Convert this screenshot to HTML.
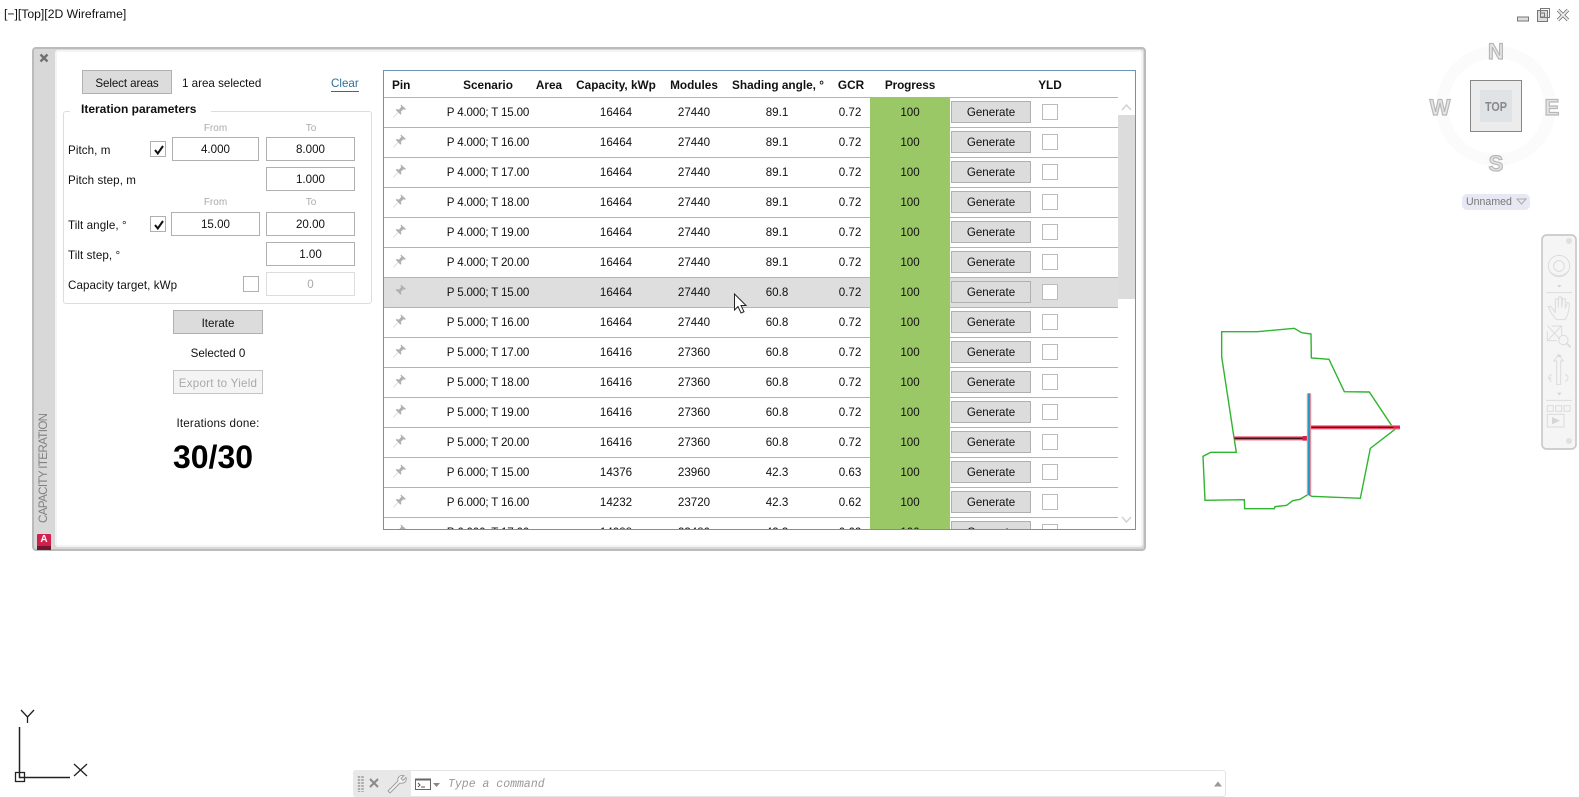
<!DOCTYPE html>
<html><head><meta charset="utf-8"><title>Capacity Iteration</title>
<style>
html,body{margin:0;padding:0;background:#fff;width:1579px;height:797px;overflow:hidden}
body{position:relative;font:11.6px "Liberation Sans",sans-serif;color:#111}
.abs,.t,.btn,.inp,.chk{position:absolute}
.t{white-space:nowrap}
.ctr{text-align:center}
.btn{box-sizing:border-box;background:#dcdcdc;border:1px solid #b0b0b0;text-align:center;line-height:25px}
.inp{box-sizing:border-box;background:#fff;border:1px solid #b0b0b0;text-align:center;line-height:24px;height:24px}
.chk{box-sizing:border-box;width:16px;height:16px;background:#fff;border:1px solid #b0b0b0}
.chk svg{position:absolute;left:1px;top:1px}
.hd{position:absolute;top:7px;font-weight:bold;font-size:11.8px;text-align:center;white-space:nowrap}
.r{position:absolute;left:0;width:734px;height:30px;box-sizing:border-box;border-top:1px solid #b4b4b4;line-height:30px}
.r span{position:absolute;top:0;text-align:center;white-space:nowrap}
.r .a{left:54px;width:100px;letter-spacing:-.17px}
.r .b{left:192px;width:80px}
.r .c{left:270px;width:80px}
.r .d{left:353px;width:80px}
.r .e{left:436px;width:60px}
.r .f{left:486px;width:80px;background:#9bc866;height:30px;top:-1px;line-height:32px}
.r .g{left:567px;top:3px;width:80px;height:22px;box-sizing:border-box;background:#dcdcdc;border:1px solid #b0b0b0;line-height:22px}
.r .h{left:658px;top:6px;width:16px;height:16px;box-sizing:border-box;border:1px solid #bbb;background:#fff}
.r svg{position:absolute;left:8px;top:5px}
.sel{background:#dedede}
.l{letter-spacing:.08px}
</style></head><body>
<svg width="0" height="0" style="position:absolute"><defs>
<g id="p"><path d="M9 1.500 14 6 12.600 6.800 11.600 6.200 8.900 8.600 9.400 11 8.400 11.600 3.800 7 4.600 6 7 6.600 9.400 3.600 8.500 2.600Z" fill="#b0b0b0"/><path d="M5.800 9.500 1.500 14.500" stroke="#e2e2e2" stroke-width="1.200"/></g>
</defs></svg>

<div class="t" style="left:4px;top:7px;font-size:12.2px">[&minus;][Top][2D Wireframe]</div>

<!-- Window controls -->
<svg class="abs" style="left:1510px;top:5px" width="65" height="20" fill="none">
<rect x="7.500" y="12" width="11" height="4" fill="#ddd" stroke="#777"/>
<rect x="27.500" y="5.500" width="10" height="11" fill="#ddd" stroke="#777"/><rect x="30.500" y="3.500" width="9" height="9" stroke="#777"/><rect x="30.500" y="8" width="4" height="4" stroke="#777"/>
<path d="M48 5 58 15M58 5 48 15" stroke="#777" stroke-width="3.400"/><path d="M48 5 58 15M58 5 48 15" stroke="#eee" stroke-width="1.800"/>
</svg>

<!-- ViewCube -->
<svg class="abs" style="left:1425px;top:35px" width="145" height="145">
<circle cx="71" cy="71" r="54" fill="none" stroke="#fbfbfb" stroke-width="12"/>
<rect x="45.500" y="45.500" width="51" height="51" fill="#ececec" stroke="#888" stroke-width="1"/>
<rect x="55" y="55" width="32" height="32" fill="#dfe3e5"/>
<text x="71" y="76" text-anchor="middle" font-family="Liberation Sans" font-weight="bold" font-size="12.500" fill="#888" textLength="22" lengthAdjust="spacingAndGlyphs">TOP</text>
<g font-family="Liberation Sans" font-weight="bold" font-size="22" fill="#e6e6e6" stroke="#b8b8b8" stroke-width="1.200" text-anchor="middle">
<text x="71" y="24">N</text><text x="71" y="136">S</text><text x="15" y="80">W</text><text x="127" y="80">E</text></g>
</svg>
<div class="abs" style="left:1462px;top:194px;width:68px;height:16px;background:#e8e8f4;border-radius:5px"></div>
<div class="t" style="left:1466px;top:196px;font-size:10.600px;color:#777">Unnamed</div>
<svg class="abs" style="left:1516px;top:198px" width="12" height="8"><path d="M1 1H10L5.500 6Z" fill="none" stroke="#aaa"/></svg>

<!-- Nav bar -->
<svg class="abs" style="left:1510px;top:225px" width="69" height="230" viewBox="0 0 207 690" fill="none">
<rect x="96" y="30" width="102" height="642" rx="14" fill="#f5f5f5" stroke="#c9c9c9" stroke-width="5"/>
<circle cx="177" cy="48" r="9" fill="#e0e0e0"/><circle cx="177" cy="648" r="9" fill="#e0e0e0"/>
<g stroke="#dcdcdc" stroke-width="3">
<circle cx="147" cy="123" r="32"/><circle cx="147" cy="123" r="16"/><path d="M120 140Q147 165 174 140"/>
<path d="M108 203H186M108 526H186"/>
<path d="M115 245Q125 270 140 284H165Q178 265 178 235L172 232 166 250V222L158 220 155 248V216L146 216 145 248V222L136 222 136 262 122 244Z"/>
<path d="M112 347 155 302M125 303H155V330M112 320V347H140M112 302 150 342"/>
<circle cx="160" cy="345" r="14"/><path d="M170 355 182 367" stroke-width="6"/>
<path d="M146 388 132 408H140V478H152V408H160ZM125 448Q108 458 125 470M166 448Q182 458 166 470M118 460H125"/>
<rect x="112" y="542" width="18" height="17"/><rect x="137" y="542" width="18" height="17"/><rect x="162" y="542" width="18" height="17"/>
<rect x="112" y="568" width="50" height="38"/></g>
<g fill="#d6d6d6"><path d="M141 180H155L148 188ZM141 390H155L148 398ZM141 503H155L148 511Z"/><path d="M126 576 150 587 126 598Z"/></g>
</svg>

<!-- Drawing -->
<svg class="abs" style="left:1180px;top:310px" width="220" height="210" viewBox="0 0 660 630" fill="none">
<path d="M125 65H232L343 55 365 68 393 72 394 144 447 148 493 245 568 246 637 350 645 358 571 415 541 565 395 559 385 553 360 568 338 572 320 586 285 590 283 596H194L193 569 75 571 69 439 92 427H169L162 383 125 140Z" stroke="#2fb52f" stroke-width="4.200"/>
<path d="M163 385H385M390 352H660" stroke="#f1808f" stroke-width="13"/>
<path d="M163 385H370M390 352H660" stroke="#e01c44" stroke-width="7"/>
<path d="M163 385H368M392 352H640" stroke="#301018" stroke-width="3"/>
<rect x="368" y="378" width="18" height="14" fill="#e01c44"/>
<path d="M387 250V555" stroke="#f08a9c" stroke-width="13"/>
<path d="M387 250V555" stroke="#1f9fc0" stroke-width="6"/>
</svg>

<!-- Panel -->
<div class="abs" style="left:32px;top:47px;width:1114px;height:504px;box-sizing:border-box;background:#d8d8d8;border:2px solid #bbb;border-radius:4px"></div>
<div class="abs" style="left:55px;top:50px;width:1088px;height:497px;box-sizing:border-box;background:#fff;border:2px solid #f4f4f4;border-radius:3px"></div>
<svg class="abs" style="left:39px;top:53px" width="10" height="10"><path d="M1.500 1.500 8.500 8.500M8.500 1.500 1.500 8.500" stroke="#707070" stroke-width="2.400"/></svg>
<div class="t" style="left:36px;top:413px;height:110px;width:15px;writing-mode:vertical-rl;transform:rotate(180deg);font-size:11.600px;color:#808080;line-height:15px;text-align:left;letter-spacing:-.65px">CAPACITY ITERATION</div>
<div class="abs" style="left:37px;top:534px;width:14px;height:16px;background:#d31f4e;border-radius:1px"></div>
<div class="abs" style="left:37px;top:546px;width:14px;height:4px;background:#731630"></div>
<div class="t ctr" style="left:37px;top:534px;width:14px;color:#fff;font-weight:bold;font-size:10px;line-height:12px">A</div>

<!-- Left controls -->
<div class="btn" style="left:82px;top:70px;width:90px;height:24px;letter-spacing:-.1px">Select areas</div>
<div class="t" style="left:182px;top:77px">1 area selected</div>
<div class="t" style="left:331px;top:77px;color:#2d6f95;border-bottom:1px solid #2d6f95;padding-bottom:1px">Clear</div>

<div class="abs" style="left:63px;top:111px;width:309px;height:193px;box-sizing:border-box;border:1px solid #d4dfe6;border-radius:3px"></div>
<div class="abs" style="left:70px;top:105px;width:141px;height:10px;background:#fff"></div>
<div class="t" style="left:81px;top:102px;font-weight:bold;font-size:12px">Iteration parameters</div>

<div class="t ctr" style="left:175px;top:123px;width:81px;font-size:10px;color:#aaa">From</div>
<div class="t ctr" style="left:271px;top:123px;width:80px;font-size:10px;color:#aaa">To</div>
<div class="t l" style="left:68px;top:144px">Pitch, m</div>
<div class="chk" style="left:150px;top:141px"><svg width="14" height="14"><path d="M3 7 5.800 10.500 11 3" fill="none" stroke="#111" stroke-width="2"/></svg></div>
<div class="inp" style="left:172px;top:137px;width:87px">4.000</div>
<div class="inp" style="left:266px;top:137px;width:89px">8.000</div>
<div class="t l" style="left:68px;top:174px">Pitch step, m</div>
<div class="inp" style="left:266px;top:167px;width:89px">1.000</div>
<div class="t ctr" style="left:175px;top:197px;width:81px;font-size:10px;color:#aaa">From</div>
<div class="t ctr" style="left:271px;top:197px;width:80px;font-size:10px;color:#aaa">To</div>
<div class="t l" style="left:68px;top:219px">Tilt angle, °</div>
<div class="chk" style="left:150px;top:216px"><svg width="14" height="14"><path d="M3 7 5.800 10.500 11 3" fill="none" stroke="#111" stroke-width="2"/></svg></div>
<div class="inp" style="left:171px;top:212px;width:89px">15.00</div>
<div class="inp" style="left:266px;top:212px;width:89px">20.00</div>
<div class="t l" style="left:68px;top:249px">Tilt step, °</div>
<div class="inp" style="left:266px;top:242px;width:89px">1.00</div>
<div class="t l" style="left:68px;top:279px">Capacity target, kWp</div>
<div class="chk" style="left:243px;top:276px"></div>
<div class="inp" style="left:266px;top:272px;width:89px;border-color:#ddd;color:#aaa">0</div>

<div class="btn" style="left:173px;top:310px;width:90px;height:24px">Iterate</div>
<div class="t ctr" style="left:173px;top:347px;width:90px">Selected 0</div>
<div class="btn" style="left:173px;top:370px;width:90px;height:24px;background:#f4f4f4;border-color:#c4c4c4;color:#aaa;letter-spacing:.25px">Export to Yield</div>
<div class="t ctr" style="left:173px;top:417px;width:90px;letter-spacing:.2px">Iterations done:</div>
<div class="t ctr" style="left:163px;top:438px;width:100px;font-weight:bold;font-size:32px;line-height:38px;color:#000">30/30</div>

<!-- Table -->
<div class="abs" style="left:383px;top:70px;width:753px;height:460px;box-sizing:border-box;border:1px solid #6f93b8"></div>
<div class="abs" style="left:384px;top:71px;width:751px;height:458px;overflow:hidden">
<div class="hd" style="left:8px">Pin</div>
<div class="hd" style="left:64px;width:80px">Scenario</div>
<div class="hd" style="left:145px;width:40px">Area</div>
<div class="hd" style="left:182px;width:100px">Capacity, kWp</div>
<div class="hd" style="left:270px;width:80px">Modules</div>
<div class="hd" style="left:324px;width:140px">Shading angle, °</div>
<div class="hd" style="left:447px;width:40px">GCR</div>
<div class="hd" style="left:486px;width:80px;letter-spacing:-.1px">Progress</div>
<div class="hd" style="left:646px;width:40px">YLD</div>

<div class="r" style="top:26px"><svg width="16" height="16"><use href="#p"/></svg><span class="a">P 4.000; T 15.00</span><span class="b">16464</span><span class="c">27440</span><span class="d">89.1</span><span class="e">0.72</span><span class="f">100</span><span class="g">Generate</span><span class="h"></span></div>
<div class="r" style="top:56px"><svg width="16" height="16"><use href="#p"/></svg><span class="a">P 4.000; T 16.00</span><span class="b">16464</span><span class="c">27440</span><span class="d">89.1</span><span class="e">0.72</span><span class="f">100</span><span class="g">Generate</span><span class="h"></span></div>
<div class="r" style="top:86px"><svg width="16" height="16"><use href="#p"/></svg><span class="a">P 4.000; T 17.00</span><span class="b">16464</span><span class="c">27440</span><span class="d">89.1</span><span class="e">0.72</span><span class="f">100</span><span class="g">Generate</span><span class="h"></span></div>
<div class="r" style="top:116px"><svg width="16" height="16"><use href="#p"/></svg><span class="a">P 4.000; T 18.00</span><span class="b">16464</span><span class="c">27440</span><span class="d">89.1</span><span class="e">0.72</span><span class="f">100</span><span class="g">Generate</span><span class="h"></span></div>
<div class="r" style="top:146px"><svg width="16" height="16"><use href="#p"/></svg><span class="a">P 4.000; T 19.00</span><span class="b">16464</span><span class="c">27440</span><span class="d">89.1</span><span class="e">0.72</span><span class="f">100</span><span class="g">Generate</span><span class="h"></span></div>
<div class="r" style="top:176px"><svg width="16" height="16"><use href="#p"/></svg><span class="a">P 4.000; T 20.00</span><span class="b">16464</span><span class="c">27440</span><span class="d">89.1</span><span class="e">0.72</span><span class="f">100</span><span class="g">Generate</span><span class="h"></span></div>
<div class="r sel" style="top:206px"><svg width="16" height="16"><use href="#p"/></svg><span class="a">P 5.000; T 15.00</span><span class="b">16464</span><span class="c">27440</span><span class="d">60.8</span><span class="e">0.72</span><span class="f">100</span><span class="g">Generate</span><span class="h"></span></div>
<div class="r" style="top:236px"><svg width="16" height="16"><use href="#p"/></svg><span class="a">P 5.000; T 16.00</span><span class="b">16464</span><span class="c">27440</span><span class="d">60.8</span><span class="e">0.72</span><span class="f">100</span><span class="g">Generate</span><span class="h"></span></div>
<div class="r" style="top:266px"><svg width="16" height="16"><use href="#p"/></svg><span class="a">P 5.000; T 17.00</span><span class="b">16416</span><span class="c">27360</span><span class="d">60.8</span><span class="e">0.72</span><span class="f">100</span><span class="g">Generate</span><span class="h"></span></div>
<div class="r" style="top:296px"><svg width="16" height="16"><use href="#p"/></svg><span class="a">P 5.000; T 18.00</span><span class="b">16416</span><span class="c">27360</span><span class="d">60.8</span><span class="e">0.72</span><span class="f">100</span><span class="g">Generate</span><span class="h"></span></div>
<div class="r" style="top:326px"><svg width="16" height="16"><use href="#p"/></svg><span class="a">P 5.000; T 19.00</span><span class="b">16416</span><span class="c">27360</span><span class="d">60.8</span><span class="e">0.72</span><span class="f">100</span><span class="g">Generate</span><span class="h"></span></div>
<div class="r" style="top:356px"><svg width="16" height="16"><use href="#p"/></svg><span class="a">P 5.000; T 20.00</span><span class="b">16416</span><span class="c">27360</span><span class="d">60.8</span><span class="e">0.72</span><span class="f">100</span><span class="g">Generate</span><span class="h"></span></div>
<div class="r" style="top:386px"><svg width="16" height="16"><use href="#p"/></svg><span class="a">P 6.000; T 15.00</span><span class="b">14376</span><span class="c">23960</span><span class="d">42.3</span><span class="e">0.63</span><span class="f">100</span><span class="g">Generate</span><span class="h"></span></div>
<div class="r" style="top:416px"><svg width="16" height="16"><use href="#p"/></svg><span class="a">P 6.000; T 16.00</span><span class="b">14232</span><span class="c">23720</span><span class="d">42.3</span><span class="e">0.62</span><span class="f">100</span><span class="g">Generate</span><span class="h"></span></div>
<div class="r" style="top:446px"><svg width="16" height="16"><use href="#p"/></svg><span class="a">P 6.000; T 17.00</span><span class="b">14088</span><span class="c">23480</span><span class="d">42.3</span><span class="e">0.62</span><span class="f">100</span><span class="g">Generate</span><span class="h"></span></div>

<!-- Scrollbar -->
<div class="abs" style="left:734px;top:26px;width:17px;height:432px;background:#fff"></div>
<div class="abs" style="left:734px;top:44px;width:17px;height:184px;background:#dcdcdc"></div>
<svg class="abs" style="left:734px;top:26px" width="17" height="432" fill="none"><path d="M4 13 8.500 8 13 13" stroke="#d0d0d0" stroke-width="1.400"/><path d="M4 420 8.500 425 13 420" stroke="#d0d0d0" stroke-width="1.400"/></svg>
</div>

<!-- Cursor -->
<svg class="abs" style="left:733px;top:293px" width="16" height="22"><path d="M1.500 1V17L5 13.500 8 20 11 18.700 8 12.500H13Z" fill="#fff" stroke="#222" stroke-width="1"/></svg>

<!-- UCS -->
<svg class="abs" style="left:0;top:700px" width="100" height="90" fill="none" stroke="#222" stroke-width="1.300">
<path d="M19.500 27V77.500H70" stroke-width="1.500"/><rect x="15.500" y="72.500" width="9" height="9"/>
<path d="M21 10 27.500 17 34 10M27.500 17V23"/><path d="M74 64 87 76M87 64 74 76"/>
</svg>

<!-- Command line -->
<div class="abs" style="left:353px;top:770px;width:873px;height:27px;box-sizing:border-box;background:#fff;border:1px solid #e4e4e4;border-radius:3px"></div>
<div class="abs" style="left:353px;top:770px;width:58px;height:27px;background:#e8e8e8;border-radius:3px 0 0 3px"></div>
<svg class="abs" style="left:353px;top:770px" width="100" height="27" fill="none">
<path d="M6 6V22M9.500 6V22" stroke="#aaa" stroke-width="2.400" stroke-dasharray="2 1"/>
<path d="M17 9 25 17M25 9 17 17" stroke="#8a8a8a" stroke-width="2"/>
<path d="M35 21 45 11C44 7.500 47 4.500 51 5.500L48 8.500 50 10.500 53 7.500C54 11.500 51 14 47 13L37 23Z" stroke="#9a9a9a" stroke-width=".9" fill="#f4f4f4"/>
<rect x="62.500" y="9.500" width="15" height="10" fill="#fff" stroke="#666"/><path d="M62 9.500H78" stroke="#666" stroke-width="2"/><path d="M65 13 67 15 65 17M68 17H72" stroke="#555"/>
<path d="M80 13H87L83.500 17Z" fill="#888"/>
</svg>
<div class="t" style="left:448px;top:778px;font:italic 11.500px 'Liberation Mono',monospace;color:#999">Type a command</div>
<svg class="abs" style="left:1213px;top:780px" width="10" height="8"><path d="M1 6.500H9L5 1.500Z" fill="#999"/></svg>
</body></html>
